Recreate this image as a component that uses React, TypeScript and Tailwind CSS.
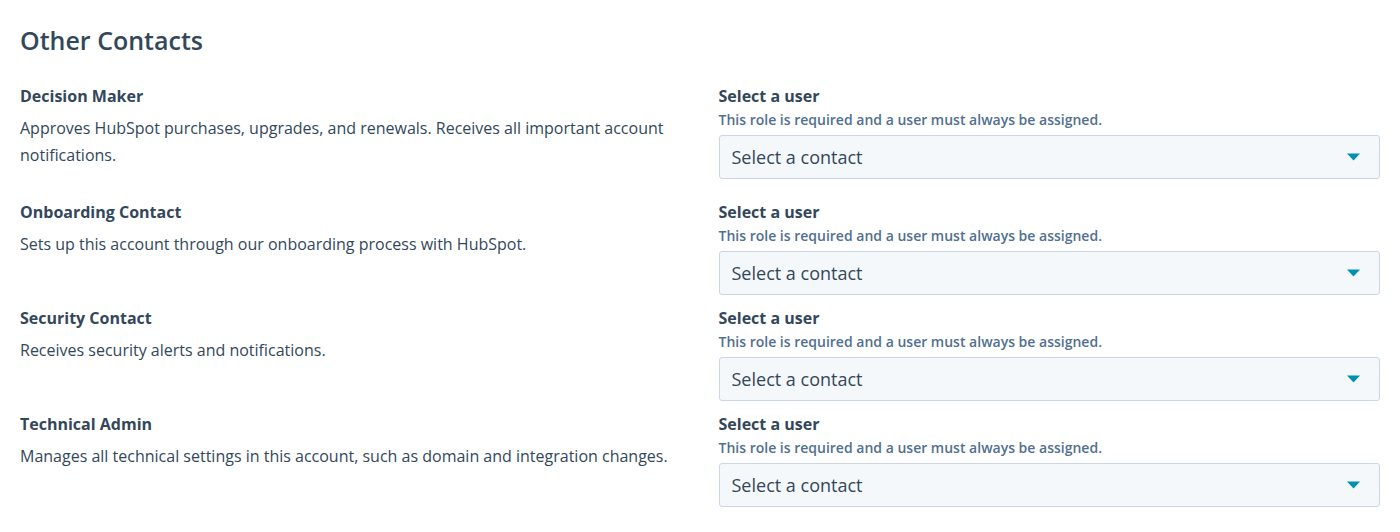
const roles = [
  {
    title: 'Decision Maker',
    text: 'Approves HubSpot purchases, upgrades, and renewals. Receives all important account notifications.',
  },
  {
    title: 'Onboarding Contact',
    text: 'Sets up this account through our onboarding process with HubSpot.',
  },
  {
    title: 'Security Contact',
    text: 'Receives security alerts and notifications.',
  },
  {
    title: 'Technical Admin',
    text: 'Manages all technical settings in this account, such as domain and integration changes.',
  },
];

function ContactSelect() {
  return (
    <button
      type="button"
      className="flex h-[44px] w-full items-center justify-between rounded-[3px] border border-[#cbd6e2] bg-[#f5f8fa] pl-[12px] pr-[19px] text-left text-[18px] text-[#33475b]"
    >
      <span>Select a contact</span>
      <svg width="13" height="8" viewBox="0 0 13 8" aria-hidden="true">
        <path d="M0 0.5h13L6.5 7.5z" fill="#0091ae" />
      </svg>
    </button>
  );
}

export default function App() {
  return (
    <div className="min-h-[532px] bg-white px-5 pt-[22px] text-[#33475b] font-['Open_Sans','Noto_Sans',sans-serif]">
      <h2 className="mb-[26px] text-[25px] font-semibold leading-[36px]">Other Contacts</h2>

      <div className="grid grid-cols-2 gap-x-[37px]">
        {roles.map((role) => (
          <div key={role.title} className="contents">
            <div className="pb-[31px]">
              <h3 className="text-[16px] font-bold leading-[24px]">{role.title}</h3>
              <p className="mt-[7px] text-[16px] leading-[27px]">{role.text}</p>
            </div>
            <div className="pb-[11px]">
              <div className="text-[16px] font-bold leading-[24px]">Select a user</div>
              <div className="mt-[2px] text-[14px] font-semibold leading-[20px] text-[#516f90]">
                This role is required and a user must always be assigned.
              </div>
              <div className="mt-[5px]">
                <ContactSelect />
              </div>
            </div>
          </div>
        ))}
      </div>
    </div>
  );
}
